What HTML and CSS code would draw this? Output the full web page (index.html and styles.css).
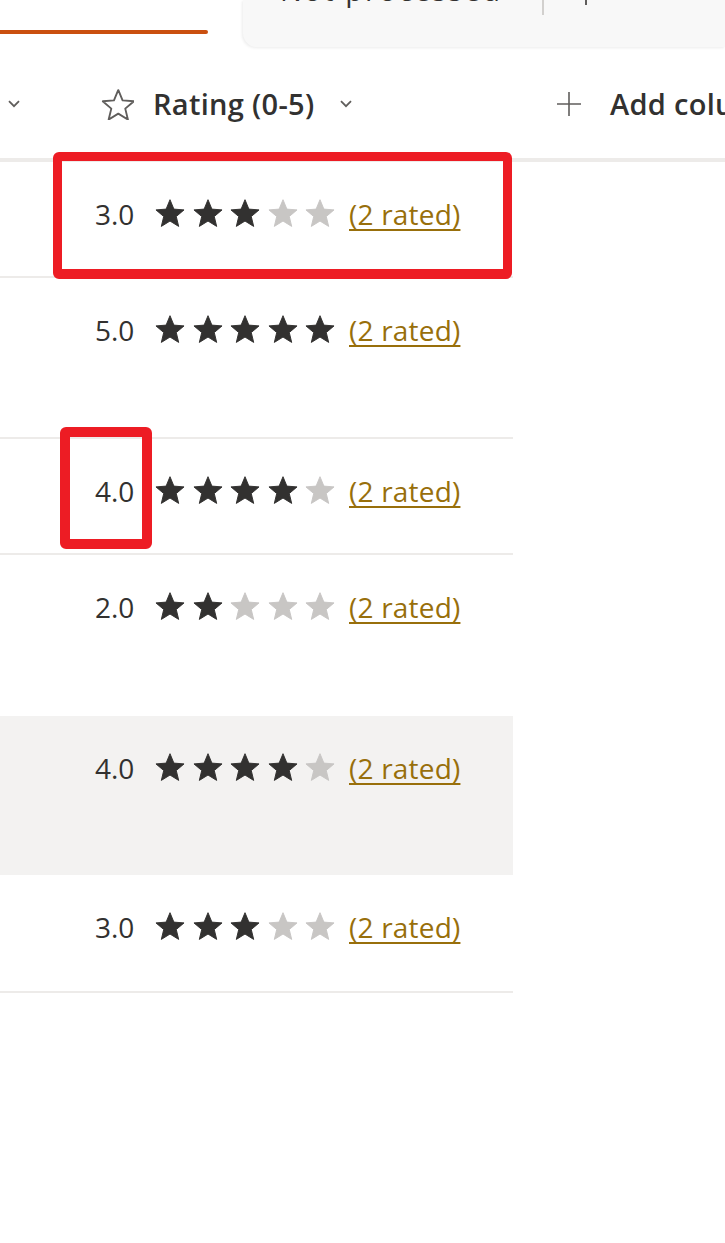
FILE: index.html
```html
<!DOCTYPE html>
<html lang="en">
<head>
    <meta charset="UTF-8">
    <meta name="viewport" content="width=device-width, initial-scale=1.0">
    <title>Rating (0-5)</title>
    <link rel="stylesheet" href="styles.css">
</head>
<body>
    <svg class="sprite" xmlns="http://www.w3.org/2000/svg">
        <symbol id="star" viewBox="-0.5 -0.5 25 24">
            <polygon points="12,0 15.23,7.85 23.7,8.5 17.23,14 19.23,22.25 12,17.8 4.77,22.25 6.77,14 0.3,8.5 8.77,7.85"/>
        </symbol>
        <symbol id="chevron" viewBox="0 0 12 8">
            <path d="M1 1.2 L6 6.2 L11 1.2"/>
        </symbol>
    </svg>

    <div class="page">
        <div class="tabs">
            <div class="tab-active"><span class="tab-line"></span></div>
            <div class="views">
                <span class="view-name">Not processed</span>
                <span class="view-sep"></span>
                <span class="view-mark"></span>
            </div>
        </div>

        <div class="col-header">
            <div class="col col-prev">
                <svg class="chevron"><use href="#chevron"/></svg>
            </div>
            <div class="col col-rating">
                <svg class="star-outline" viewBox="-1 -1 26 25"><use href="#star"/></svg>
                <span class="col-title">Rating (0-5)</span>
                <svg class="chevron"><use href="#chevron"/></svg>
            </div>
            <div class="col col-add">
                <svg class="plus" viewBox="0 0 24 24"><path d="M12 0 V24 M0 12 H24"/></svg>
                <span class="col-title">Add column</span>
            </div>
        </div>

        <div class="rows">
            <div class="row short">
                <span class="score">3.0</span>
                <span class="stars">
                    <svg class="star on"><use href="#star"/></svg>
                    <svg class="star on"><use href="#star"/></svg>
                    <svg class="star on"><use href="#star"/></svg>
                    <svg class="star"><use href="#star"/></svg>
                    <svg class="star"><use href="#star"/></svg>
                </span>
                <a class="rated" href="#">(2 rated)</a>
            </div>
            <div class="row tall">
                <span class="score">5.0</span>
                <span class="stars">
                    <svg class="star on"><use href="#star"/></svg>
                    <svg class="star on"><use href="#star"/></svg>
                    <svg class="star on"><use href="#star"/></svg>
                    <svg class="star on"><use href="#star"/></svg>
                    <svg class="star on"><use href="#star"/></svg>
                </span>
                <a class="rated" href="#">(2 rated)</a>
            </div>
            <div class="row short">
                <span class="score">4.0</span>
                <span class="stars">
                    <svg class="star on"><use href="#star"/></svg>
                    <svg class="star on"><use href="#star"/></svg>
                    <svg class="star on"><use href="#star"/></svg>
                    <svg class="star on"><use href="#star"/></svg>
                    <svg class="star"><use href="#star"/></svg>
                </span>
                <a class="rated" href="#">(2 rated)</a>
            </div>
            <div class="row tall no-line">
                <span class="score">2.0</span>
                <span class="stars">
                    <svg class="star on"><use href="#star"/></svg>
                    <svg class="star on"><use href="#star"/></svg>
                    <svg class="star"><use href="#star"/></svg>
                    <svg class="star"><use href="#star"/></svg>
                    <svg class="star"><use href="#star"/></svg>
                </span>
                <a class="rated" href="#">(2 rated)</a>
            </div>
            <div class="row tall hover">
                <span class="score">4.0</span>
                <span class="stars">
                    <svg class="star on"><use href="#star"/></svg>
                    <svg class="star on"><use href="#star"/></svg>
                    <svg class="star on"><use href="#star"/></svg>
                    <svg class="star on"><use href="#star"/></svg>
                    <svg class="star"><use href="#star"/></svg>
                </span>
                <a class="rated" href="#">(2 rated)</a>
            </div>
            <div class="row short last">
                <span class="score">3.0</span>
                <span class="stars">
                    <svg class="star on"><use href="#star"/></svg>
                    <svg class="star on"><use href="#star"/></svg>
                    <svg class="star on"><use href="#star"/></svg>
                    <svg class="star"><use href="#star"/></svg>
                    <svg class="star"><use href="#star"/></svg>
                </span>
                <a class="rated" href="#">(2 rated)</a>
            </div>
        </div>

        <!-- annotation boxes drawn over the list -->
        <div class="callout callout-row"></div>
        <div class="callout callout-score"></div>
    </div>
</body>
</html>
```

FILE: styles.css
```css
body {
    margin: 0;
    background: #fff;
    color: #323130;
    font-family: "Open Sans", "Noto Sans", Arial, sans-serif;
}
.sprite {
    display: none;
}
.page {
    position: relative;
    width: 725px;
    height: 1243px;
    overflow: hidden;
}

/* view tabs, cut off at the top */
.tabs {
    display: flex;
    height: 47px;
}
.tab-active {
    width: 243px;
    flex: none;
}
.tab-line {
    display: block;
    width: 208px;
    height: 4px;
    margin-top: 30px;
    background: #ca5010;
    border-radius: 0 2px 2px 0;
}
.views {
    flex: 1;
    display: flex;
    align-items: flex-start;
    background: #f8f8f8;
    border-bottom-left-radius: 14px;
    box-shadow: -1px 1px 3px rgba(0, 0, 0, 0.08);
    overflow: hidden;
    white-space: nowrap;
}
.view-name {
    width: 262px;
    padding-left: 37px;
    margin-top: -28px;
    font-size: 29px;
    letter-spacing: 2px;
    line-height: 36px;
    flex: none;
}
.view-sep {
    width: 2px;
    height: 15px;
    background: #d2d0ce;
    flex: none;
}
.view-mark {
    width: 2px;
    height: 5px;
    margin-left: 41px;
    background: #605e5c;
    flex: none;
}

/* column headers */
.col-header {
    display: flex;
    height: 111px;
    border-bottom: 4px solid #edebe9;
    white-space: nowrap;
}
.col {
    display: flex;
    align-items: center;
    padding-top: 3px;
    flex: none;
}
.col-prev {
    width: 72px;
    padding-left: 8px;
}
.col-rating {
    width: 413px;
    padding-left: 20px;
}
.col-add {
    padding-left: 44px;
}
.col-title {
    font-size: 29px;
    font-weight: 600;
    letter-spacing: 0.3px;
    line-height: 36px;
}
.chevron {
    width: 12px;
    height: 8px;
    fill: none;
    stroke: #605e5c;
    stroke-width: 1.8;
}
.col-rating .chevron {
    margin-left: 26px;
}
.star-outline {
    width: 34px;
    height: 32px;
    margin-right: 19px;
    fill: none;
    stroke: #605e5c;
    stroke-width: 1.4;
    stroke-linejoin: round;
}
.plus {
    width: 24px;
    height: 24px;
    margin-right: 29px;
    stroke: #605e5c;
    stroke-width: 1.6;
}

/* rating rows */
.rows {
    width: 513px;
}
.row {
    display: flex;
    align-items: flex-start;
    box-sizing: border-box;
    padding: 34px 0 0 95px;
    border-bottom: 2px solid #edebe9;
}
.row.short {
    height: 116px;
}
.row.tall {
    height: 161px;
}
.row.no-line {
    border-bottom-color: #fff;
}
.row.hover {
    height: 159px;
    background: #f3f2f1;
    border-bottom-color: #f3f2f1;
}
.row.last {
    height: 118px;
}
.score {
    width: 38px;
    text-align: right;
    font-size: 28px;
    line-height: 36px;
}
.stars {
    display: flex;
    gap: 7.5px;
    margin: 3px 14px 0 22px;
}
.star {
    width: 30px;
    height: 29px;
    fill: #c8c6c4;
    stroke: #c8c6c4;
    stroke-width: 0.8;
    stroke-linejoin: round;
}
.star.on {
    fill: #323130;
    stroke: #323130;
}
.rated {
    font-size: 28px;
    letter-spacing: 0.2px;
    line-height: 36px;
    color: #986f0b;
    text-decoration: underline;
    text-decoration-thickness: 2px;
    text-underline-offset: 4px;
}

/* red annotation boxes */
.callout {
    position: absolute;
    box-sizing: border-box;
    border: 10px solid #ed1c24;
    border-radius: 6px;
}
.callout-row {
    left: 53px;
    top: 152px;
    width: 459px;
    height: 127px;
    border-width: 9px 9px 10px 9px;
}
.callout-score {
    left: 60px;
    top: 427px;
    width: 92px;
    height: 122px;
}
```
